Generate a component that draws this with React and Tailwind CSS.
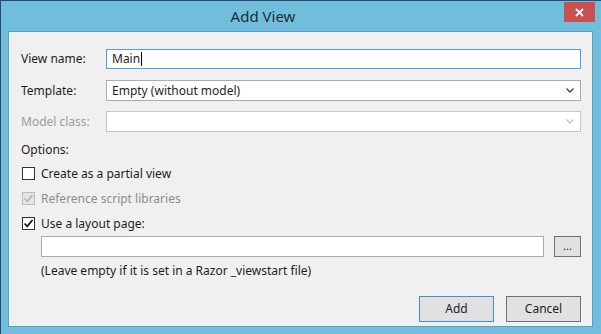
import React from 'react';

const font = { fontFamily: '"Noto Sans", "Open Sans", sans-serif' };

function Check({ disabled }) {
    return (
        <svg width="11" height="11" viewBox="0 0 11 11" className="block">
            <path d="M1.5 5.5 L4.2 8.3 L9.5 2" fill="none" stroke={disabled ? '#b5b5b5' : '#1c1c1c'} strokeWidth="1.8" />
        </svg>
    );
}

function CheckRow({ label, checked, disabled }) {
    return (
        <div className="flex items-center h-[13px]">
            <div className={`w-[13px] h-[13px] border flex items-center justify-center ${disabled ? 'border-[#bcbcbc] bg-[#e6e6e6]' : 'border-[#333333] bg-white'}`}>
                {checked && <Check disabled={disabled} />}
            </div>
            <span className={`ml-[6px] text-[12px] leading-none ${disabled ? 'text-[#8d8d8d]' : 'text-[#1e1e1e]'}`}>{label}</span>
        </div>
    );
}

function Chevron({ color }) {
    return (
        <svg width="8" height="5" viewBox="0 0 8 5" className="block">
            <path d="M0.5 0.5 L4 4 L7.5 0.5" fill="none" stroke={color} strokeWidth="1.3" />
        </svg>
    );
}

export default function App() {
    return (
        <div className="w-[601px] h-[334px] flex flex-col bg-[#71bedc] border-l border-t border-[#2f4a70]" style={font}>
            {/* title bar */}
            <div className="relative h-[30px] flex items-center justify-center pr-[76px]">
                <span className="text-[15px] text-[#1e2a36] pt-[1px]">Add View</span>
                <div className="absolute right-[6px] top-[1px] w-[31px] h-[20px] bg-[#c75050] flex items-center justify-center">
                    <svg width="9" height="9" viewBox="0 0 9 9">
                        <path d="M1 1 L8 8 M8 1 L1 8" stroke="#ffffff" strokeWidth="1.8" />
                    </svg>
                </div>
            </div>

            {/* body */}
            <div className="flex-1 ml-[7px] mr-[8px] mb-[7px] border border-[#5a9fc4] bg-[#f0f0f0] pl-[12px] pr-[11px] pt-[17px] text-[12px] text-[#1e1e1e]">
                <div className="flex items-center h-[20px]">
                    <span className="w-[85px]">View name:</span>
                    <div className="flex-1 h-[20px] border border-[#569de5] bg-white flex items-center pl-[5px]">
                        <span>Main</span>
                        <span className="w-px h-[14px] bg-black ml-px" />
                    </div>
                </div>
                <div className="flex items-center h-[21px] mt-[11px]">
                    <span className="w-[85px]">Template:</span>
                    <div className="flex-1 h-[21px] border border-[#acacac] bg-white flex items-center justify-between pl-[5px] pr-[6px]">
                        <span>Empty (without model)</span>
                        <Chevron color="#404040" />
                    </div>
                </div>
                <div className="flex items-center h-[21px] mt-[10px]">
                    <span className="w-[85px] text-[#9d9d9d]">Model class:</span>
                    <div className="flex-1 h-[21px] border border-[#c6c6c6] bg-white flex items-center justify-end pr-[6px]">
                        <Chevron color="#c4c4c4" />
                    </div>
                </div>
                <div className="mt-[12px] leading-none">Options:</div>
                <div className="mt-[11px] pl-[1px] flex flex-col gap-[12px]">
                    <CheckRow label="Create as a partial view" />
                    <CheckRow label="Reference script libraries" checked disabled />
                    <CheckRow label="Use a layout page:" checked />
                </div>
                <div className="flex items-center mt-[6px] pl-[20px]">
                    <div className="w-[503px] h-[21px] border border-[#acacac] bg-white" />
                    <button className="ml-[10px] w-[27px] h-[21px] border border-[#707070] bg-[#e1e1e1] text-[11px] leading-none pb-[3px]">...</button>
                </div>
                <div className="mt-[5px] pl-[20px]">(Leave empty if it is set in a Razor _viewstart file)</div>
                <div className="flex justify-end gap-[12px] mt-[16px]">
                    <button className="w-[75px] h-[26px] border border-[#3c8ee0] bg-[#e1e1e1] text-[12px]">Add</button>
                    <button className="w-[75px] h-[26px] border border-[#707070] bg-[#e1e1e1] text-[12px]">Cancel</button>
                </div>
            </div>
        </div>
    );
}
